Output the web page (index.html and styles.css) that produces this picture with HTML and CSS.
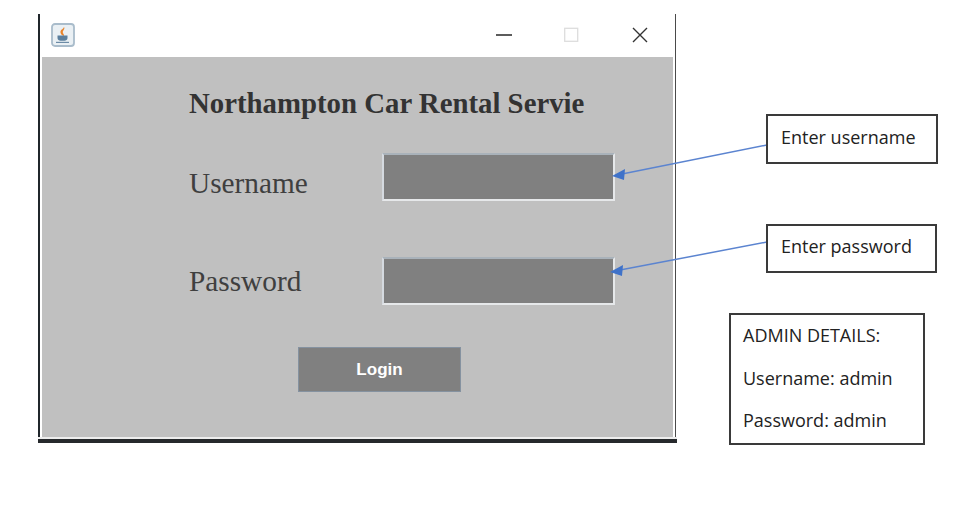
FILE: index.html
```html
<!DOCTYPE html>
<html lang="en">
<head>
    <meta charset="UTF-8">
    <title>Login</title>
    <link rel="stylesheet" href="styles.css">
</head>
<body>
    <div class="window">
        <div class="titlebar">
            <svg class="app-icon" width="24" height="24" viewBox="0 0 24 24">
                <rect x="1" y="1" width="22" height="22" rx="3" fill="#eaf0f4" stroke="#a9bccb" stroke-width="1.800"/>
                <path d="M13 4c1.500 2.500-2 3.500-1 6 .4 1 1.200 1.600 1 3-2.500-1-4-2.500-3.500-4.800.4-1.700 3-2.200 3.500-4.200z" fill="#e8842c"/>
                <path d="M6.500 12.500h10v2.500c0 1.800-1.500 2.800-3 2.800h-4c-1.500 0-3-1-3-2.800z" fill="#5b7f9e"/>
                <path d="M5 18.800h13v1.200H5z" fill="#6c8ba6"/>
            </svg>
            <div class="win-buttons">
                <svg width="16" height="16" viewBox="0 0 16 16"><path d="M0 8h16" stroke="#333" stroke-width="1.600"/></svg>
                <svg width="16" height="16" viewBox="0 0 16 16"><rect x="0.700" y="1.300" width="13" height="13" fill="none" stroke="#ddd" stroke-width="1.300"/></svg>
                <svg width="16" height="16" viewBox="0 0 16 16"><path d="M1 1l14 14M15 1L1 15" stroke="#333" stroke-width="1.400"/></svg>
            </div>
        </div>
        <div class="content">
            <h1>Northampton Car Rental Servie</h1>
            <div class="field field-user">
                <label>Username</label>
                <div class="input"></div>
            </div>
            <div class="field">
                <label>Password</label>
                <div class="input"></div>
            </div>
            <button class="login">Login</button>
        </div>
        <div class="strip"></div>
    </div>

    <svg class="arrows" width="975" height="513" viewBox="0 0 975 513">
        <path d="M767 145L622 174" stroke="#5b84d0" stroke-width="1.500"/>
        <path d="M612 176l13-7-1 11z" fill="#3f72c9"/>
        <path d="M767 242L620 270" stroke="#5b84d0" stroke-width="1.500"/>
        <path d="M610 272l13-7-1 11z" fill="#3f72c9"/>
    </svg>

    <div class="note note-user">Enter username</div>
    <div class="note note-pass">Enter password</div>
    <div class="note note-admin">
        <p>ADMIN DETAILS:</p>
        <p>Username: admin</p>
        <p>Password: admin</p>
    </div>
</body>
</html>
```

FILE: styles.css
```css
* {
    margin: 0;
    padding: 0;
    box-sizing: border-box;
}

body {
    width: 975px;
    height: 513px;
    position: relative;
    background: #ffffff;
    overflow: hidden;
}

.window {
    position: absolute;
    left: 38px;
    top: 14px;
    width: 638px;
    height: 429px;
    padding: 0 2px 0 2px;
    background: #ffffff;
    border-left: 2px solid #20262b;
    border-right: 1px solid #4a4a4a;
    display: flex;
    flex-direction: column;
}

.titlebar {
    height: 43px;
    flex-shrink: 0;
    display: flex;
    align-items: center;
    justify-content: space-between;
    padding: 0 25px 2px 9px;
}

.win-buttons {
    display: flex;
    gap: 52px;
}

.content {
    flex: 1;
    background: #c0c0c0;
    padding: 31px 0 0 147px;
    display: flex;
    flex-direction: column;
    font-family: "Liberation Serif", serif;
    color: #333333;
}

h1 {
    font-size: 28.800px;
    font-weight: bold;
    line-height: 31px;
    margin-bottom: 34px;
}

.field {
    display: flex;
    align-items: center;
    height: 48px;
    margin-bottom: 56px;
}

.field label {
    width: 193px;
    font-size: 29.300px;
    color: #3f3f3f;
}

/* the first label sits lower than its box in the original */
.field-user label {
    padding-top: 12px;
}

.input {
    width: 233px;
    height: 48px;
    background: #808080;
    border: 2px solid #e6e8ea;
    border-top-color: #a9b2ba;
    border-left-color: #d5dae0;
}

.login {
    width: 163px;
    height: 45px;
    margin: -14px 0 0 109px;
    background: #808080;
    border: 1px solid #8592a0;
    color: #ffffff;
    font-family: "Liberation Sans", sans-serif;
    font-size: 17px;
    font-weight: bold;
}

.strip {
    height: 6px;
    flex-shrink: 0;
    margin: 0 -4px 0 -4px;
    padding: 0;
    background: linear-gradient(#ededed 2px, #26292c 2px);
}

.arrows {
    position: absolute;
    left: 0;
    top: 0;
}

.note {
    position: absolute;
    background: #ffffff;
    border: 2px solid #3a3a3a;
    font-family: "Open Sans", sans-serif;
    font-size: 18px;
    line-height: 22px;
    color: #222222;
}

.note-user {
    left: 766px;
    top: 114px;
    width: 172px;
    height: 50px;
    padding: 10px 0 0 13px;
}

.note-pass {
    left: 766px;
    top: 224px;
    width: 171px;
    height: 49px;
    padding: 9px 0 0 13px;
}

.note-admin {
    left: 729px;
    top: 313px;
    width: 196px;
    height: 132px;
    padding: 9px 0 0 12px;
}

.note-admin p {
    height: 42.500px;
}
```
